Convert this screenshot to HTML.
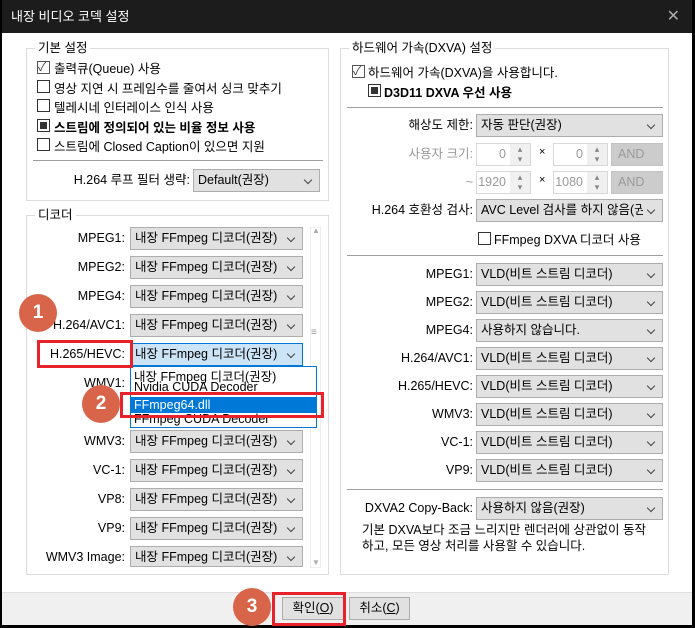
<!DOCTYPE html>
<html><head><meta charset="utf-8"><style>
*{box-sizing:border-box;margin:0;padding:0}
body{width:695px;height:628px;background:#000;position:relative;overflow:hidden;font-family:"Liberation Sans","Noto Sans CJK KR",sans-serif;font-size:12.5px;color:#000}
.a{position:absolute;white-space:nowrap}
#win{position:absolute;left:2px;top:0;width:690px;height:625px;background:#fff}
#title{position:absolute;left:0;top:0;width:690px;height:33px;background:#1c1c1c;color:#fff;font-size:13px;line-height:33px;padding-left:9px}
.grp{position:absolute;border:1px solid #dcdcdc}
.gl{position:absolute;top:-9px;left:8px;background:#fff;padding:0 3px;line-height:16px}
.cb{position:absolute;width:13px;height:13px;border:1px solid #333;background:#fff}
.cb.f::after{content:"";position:absolute;left:2px;top:2px;width:7px;height:7px;background:#333}
.cmb{position:absolute;height:23px;background:#e1e1e1;border:1px solid #adadad;line-height:21px;padding-left:4px;overflow:hidden;white-space:nowrap}
.cmb::after{content:"";position:absolute;right:8px;top:7px;width:5px;height:5px;border-right:1px solid #444;border-bottom:1px solid #444;transform:rotate(45deg)}
.lb{position:absolute;text-align:right;white-space:nowrap;line-height:23px}
.sep{position:absolute;height:1px;background:#a0a0a0}
.spin{position:absolute;height:23px;border:1px solid #d8d8d8;background:#fff;color:#999;text-align:right;line-height:21px;padding-right:24px}
.spin::after{content:"▴\A▾";white-space:pre;position:absolute;right:0;top:0;width:20px;height:21px;background:#f0f0f0;font-size:9px;line-height:10px;text-align:center;color:#888}
.dis{position:absolute;height:23px;background:#ccc;border:1px solid #c4c4c4;color:#999;line-height:21px;padding-left:6px}
.circ{position:absolute;width:38px;height:38px;border-radius:50%;background:#d8654a;color:#fff;font-weight:bold;font-size:19px;text-align:center;line-height:38px;font-family:"Liberation Sans",sans-serif}
.red{position:absolute;border:3px solid #e8222a}
.btn{position:absolute;height:23px;background:#e1e1e1;border:1px solid #adadad;text-align:center;line-height:21px}
</style></head><body>
<div id="win">
<div id="title">내장 비디오 코덱 설정<span class="a" style="right:12px;top:0;font-size:16px;color:#aaa">✕</span></div>

<div class="grp" style="left:24px;top:48px;width:303px;height:153px"><span class="gl">기본 설정</span></div>
<div class="cb" style="left:35px;top:61px;border-color:#555"></div><span class="a" style="left:36px;top:58px;font-size:12px;color:#444">✓</span>
<span class="a" style="left:52px;top:58px">출력큐(Queue) 사용</span>
<div class="cb" style="left:35px;top:80px"></div><span class="a" style="left:52px;top:78px">영상 지연 시 프레임수를 줄여서 싱크 맞추기</span>
<div class="cb" style="left:35px;top:99px"></div><span class="a" style="left:52px;top:97px">텔레시네 인터레이스 인식 사용</span>
<div class="cb f" style="left:35px;top:119px"></div><span class="a" style="left:52px;top:117px;font-weight:bold">스트림에 정의되어 있는 비율 정보 사용</span>
<div class="cb" style="left:35px;top:138px"></div><span class="a" style="left:52px;top:136px">스트림에 Closed Caption이 있으면 지원</span>
<div class="sep" style="left:31px;top:160px;width:290px"></div>
<span class="lb" style="left:40px;top:169px;width:148px">H.264 루프 필터 생략:</span>
<div class="cmb" style="left:191px;top:169px;width:127px">Default(권장)</div>

<div class="grp" style="left:24px;top:215px;width:303px;height:360px"><span class="gl">디코더</span></div>
<div class="a" style="left:308px;top:227px;width:11px;height:341px;border:1px solid #eee;background:#fff"></div>
<span class="a" style="left:310px;top:226px;font-size:8px;color:#aaa">▲</span>
<span class="a" style="left:310px;top:558px;font-size:8px;color:#aaa">▼</span>
<span class="a" style="left:309px;top:327px;font-size:10px;color:#999">≡</span>

<span class="lb" style="left:20px;top:227px;width:103px">MPEG1:</span><div class="cmb" style="left:128px;top:227px;width:173px">내장 FFmpeg 디코더(권장)</div>
<span class="lb" style="left:20px;top:256px;width:103px">MPEG2:</span><div class="cmb" style="left:128px;top:256px;width:173px">내장 FFmpeg 디코더(권장)</div>
<span class="lb" style="left:20px;top:285px;width:103px">MPEG4:</span><div class="cmb" style="left:128px;top:285px;width:173px">내장 FFmpeg 디코더(권장)</div>
<span class="lb" style="left:20px;top:314px;width:103px">H.264/AVC1:</span><div class="cmb" style="left:128px;top:314px;width:173px">내장 FFmpeg 디코더(권장)</div>
<span class="lb" style="left:20px;top:343px;width:103px">H.265/HEVC:</span><div class="cmb" style="left:128px;top:343px;width:173px;background:#cce4f7;border-color:#0078d7">내장 FFmpeg 디코더(권장)</div>
<span class="lb" style="left:20px;top:372px;width:103px">WMV1:</span>
<span class="lb" style="left:20px;top:430px;width:103px">WMV3:</span><div class="cmb" style="left:128px;top:430px;width:173px">내장 FFmpeg 디코더(권장)</div>
<span class="lb" style="left:20px;top:459px;width:103px">VC-1:</span><div class="cmb" style="left:128px;top:459px;width:173px">내장 FFmpeg 디코더(권장)</div>
<span class="lb" style="left:20px;top:488px;width:103px">VP8:</span><div class="cmb" style="left:128px;top:488px;width:173px">내장 FFmpeg 디코더(권장)</div>
<span class="lb" style="left:20px;top:517px;width:103px">VP9:</span><div class="cmb" style="left:128px;top:517px;width:173px">내장 FFmpeg 디코더(권장)</div>
<span class="lb" style="left:20px;top:546px;width:103px">WMV3 Image:</span><div class="cmb" style="left:128px;top:546px;width:173px;height:21px">내장 FFmpeg 디코더(권장)</div>

<div class="a" style="left:128px;top:366px;width:187px;height:62px;border:1px solid #0078d7;background:#fff;overflow:hidden">
<span class="a" style="left:3px;top:-1px">내장 FFmpeg 디코더(권장)</span>
<span class="a" style="left:3px;top:13px">Nvidia CUDA Decoder</span>
<div class="a" style="left:0;top:30px;width:185px;height:16px;background:#0078d7;color:#fff;line-height:16px;padding-left:3px">FFmpeg64.dll</div>
<span class="a" style="left:3px;top:45px">FFmpeg CUDA Decoder</span>
</div>

<div class="grp" style="left:338px;top:48px;width:329px;height:527px"><span class="gl">하드웨어 가속(DXVA) 설정</span></div>
<div class="cb" style="left:350px;top:65px;border-color:#555"></div><span class="a" style="left:351px;top:62px;font-size:12px;color:#444">✓</span>
<span class="a" style="left:366px;top:62px">하드웨어 가속(DXVA)을 사용합니다.</span>
<div class="cb f" style="left:366px;top:84px"></div><span class="a" style="left:382px;top:82px;font-weight:bold">D3D11 DXVA 우선 사용</span>
<div class="sep" style="left:345px;top:107px;width:316px"></div>
<span class="lb" style="left:360px;top:114px;width:111px">해상도 제한:</span><div class="cmb" style="left:474px;top:114px;width:187px">자동 판단(권장)</div>
<span class="lb" style="left:360px;top:143px;width:111px;color:#999">사용자 크기:</span>
<div class="spin" style="left:474px;top:143px;width:55px">0</div><span class="a" style="left:537px;top:146px;font-size:11px">×</span>
<div class="spin" style="left:551px;top:143px;width:55px">0</div><div class="dis" style="left:609px;top:143px;width:52px">AND</div>
<span class="lb" style="left:360px;top:171px;width:111px;color:#999">~</span>
<div class="spin" style="left:474px;top:171px;width:55px">1920</div><span class="a" style="left:537px;top:174px;font-size:11px">×</span>
<div class="spin" style="left:551px;top:171px;width:55px">1080</div><div class="dis" style="left:609px;top:171px;width:52px">AND</div>
<span class="lb" style="left:340px;top:199px;width:131px">H.264 호환성 검사:</span><div class="cmb" style="left:474px;top:199px;width:187px"><span style="display:inline-block;width:162px;overflow:hidden;vertical-align:top">AVC Level 검사를 하지 않음(권장)</span></div>
<div class="cb" style="left:476px;top:232px"></div><span class="a" style="left:492px;top:229px">FFmpeg DXVA 디코더 사용</span>
<div class="sep" style="left:345px;top:255px;width:316px"></div>

<span class="lb" style="left:360px;top:263px;width:111px">MPEG1:</span><div class="cmb" style="left:474px;top:263px;width:187px">VLD(비트 스트림 디코더)</div>
<span class="lb" style="left:360px;top:291px;width:111px">MPEG2:</span><div class="cmb" style="left:474px;top:291px;width:187px">VLD(비트 스트림 디코더)</div>
<span class="lb" style="left:360px;top:319px;width:111px">MPEG4:</span><div class="cmb" style="left:474px;top:319px;width:187px">사용하지 않습니다.</div>
<span class="lb" style="left:360px;top:347px;width:111px">H.264/AVC1:</span><div class="cmb" style="left:474px;top:347px;width:187px">VLD(비트 스트림 디코더)</div>
<span class="lb" style="left:360px;top:375px;width:111px">H.265/HEVC:</span><div class="cmb" style="left:474px;top:375px;width:187px">VLD(비트 스트림 디코더)</div>
<span class="lb" style="left:360px;top:403px;width:111px">WMV3:</span><div class="cmb" style="left:474px;top:403px;width:187px">VLD(비트 스트림 디코더)</div>
<span class="lb" style="left:360px;top:431px;width:111px">VC-1:</span><div class="cmb" style="left:474px;top:431px;width:187px">VLD(비트 스트림 디코더)</div>
<span class="lb" style="left:360px;top:459px;width:111px">VP9:</span><div class="cmb" style="left:474px;top:459px;width:187px">VLD(비트 스트림 디코더)</div>
<div class="sep" style="left:345px;top:489px;width:316px"></div>
<span class="lb" style="left:340px;top:497px;width:131px">DXVA2 Copy-Back:</span><div class="cmb" style="left:474px;top:497px;width:187px">사용하지 않음(권장)</div>
<span class="a" style="left:360px;top:522px;line-height:16px">기본 DXVA보다 조금 느리지만 렌더러에 상관없이 동작<br>하고, 모든 영상 처리를 사용할 수 있습니다.</span>

<div class="a" style="left:0;top:592px;width:690px;height:33px;background:#f0f0f0;border-top:1px solid #dfdfdf"></div>
<div class="btn" style="left:280px;top:597px;width:62px">확인(<u>O</u>)</div>
<div class="btn" style="left:347px;top:597px;width:61px">취소(<u>C</u>)</div>

<div class="red" style="left:35px;top:340px;width:96px;height:28px"></div>
<div class="red" style="left:118px;top:392px;width:204px;height:26px"></div>
<div class="red" style="left:270px;top:592px;width:74px;height:34px"></div>
<div class="circ" style="left:17px;top:294px">1</div>
<div class="circ" style="left:80px;top:385px">2</div>
<div class="circ" style="left:231px;top:588px">3</div>
</div>
</body></html>
